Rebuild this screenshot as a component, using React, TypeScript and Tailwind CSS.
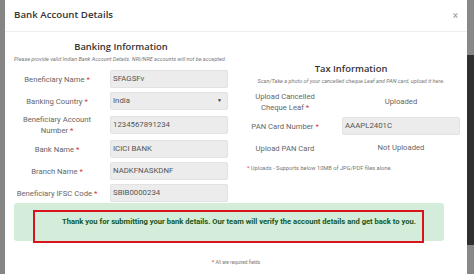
import React from "react";

const banking = [
  { label: ["Beneficiary Name"], value: "SFAGSFv" },
  { label: ["Banking Country"], value: "India", select: true },
  { label: ["Beneficiary Account", "Number"], value: "1234567891234" },
  { label: ["Bank Name"], value: "ICICI BANK" },
  { label: ["Branch Name"], value: "NADKFNASKDNF" },
  { label: ["Beneficiary IFSC Code"], value: "SBIB0000234" },
];

function Star() {
  return <span className="text-[#e0323a]"> *</span>;
}

function Label({ lines, required = true }: { lines: string[]; required?: boolean }) {
  return (
    <div className="w-[86px] shrink-0 text-center text-[7.7px] leading-[11px] text-[#666]">
      {lines.map((l, i) => (
        <div key={l}>
          {l}
          {required && i === lines.length - 1 && <Star />}
        </div>
      ))}
    </div>
  );
}

function Field({ value, select }: { value: string; select?: boolean }) {
  return (
    <div className="flex h-[18px] w-[118px] items-center justify-between rounded-[2px] border border-[#e2e2e2] bg-[#ececec] pl-[2px] pr-[5px] text-[7.8px] text-[#555]">
      <span>{value}</span>
      {select && <span className="text-[5px] text-[#333]">▼</span>}
    </div>
  );
}

export default function App() {
  return (
    <div className="flex h-[274px] w-[474px] overflow-hidden bg-[#808080] font-['Roboto',sans-serif]">
      <div className="w-[5px] shrink-0 bg-[#858585]" />
      <div className="flex w-[462px] shrink-0 flex-col bg-white">
        <div className="flex h-[32px] shrink-0 items-center justify-between border-b border-[#eeeeee] pl-[9px] pr-[9px]">
          <h1 className="font-['Open_Sans',sans-serif] text-[9.7px] font-semibold text-[#333]">
            Bank Account Details
          </h1>
          <span className="text-[10px] leading-none text-[#999]">×</span>
        </div>

        <div className="flex flex-col px-[9px]">
          <div className="flex gap-[14px]">
            <div className="flex w-[214px] flex-col">
              <h2 className="mt-[7px] text-center font-['Open_Sans',sans-serif] text-[9.4px] font-semibold leading-[16px] text-[#333]">
                Banking Information
              </h2>
              <p className="whitespace-nowrap text-[5.5px] italic leading-[8px] text-[#777]">
                Please provide valid Indian Bank Account Details. NRI/NRE accounts will not be accepted.
              </p>
              <div className="mt-[7px] flex flex-col gap-[4px]">
                {banking.map((r) => (
                  <div key={r.value} className="flex items-center gap-[10px]">
                    <Label lines={r.label} />
                    <Field value={r.value} select={r.select} />
                  </div>
                ))}
              </div>
            </div>

            <div className="flex w-[218px] flex-col">
              <h2 className="mt-[29px] text-center font-['Open_Sans',sans-serif] text-[9.4px] font-semibold leading-[16px] text-[#333]">
                Tax Information
              </h2>
              <p className="whitespace-nowrap text-center text-[5.5px] italic leading-[8px] text-[#777]">
                Scan/Take a photo of your cancelled cheque Leaf and PAN card, upload it here.
              </p>
              <div className="mt-[6px] flex flex-col gap-[4px]">
                <div className="flex items-center gap-[14px]">
                  <Label lines={["Upload Cancelled", "Cheque Leaf"]} />
                  <div className="w-[118px] text-center text-[7.7px] text-[#666]">Uploaded</div>
                </div>
                <div className="flex items-center gap-[14px]">
                  <Label lines={["PAN Card Number"]} />
                  <Field value="AAAPL2401C" />
                </div>
                <div className="flex h-[18px] items-center gap-[14px]">
                  <Label lines={["Upload PAN Card"]} required={false} />
                  <div className="w-[118px] text-center text-[7.7px] text-[#666]">Not Uploaded</div>
                </div>
              </div>
              <p className="mt-[7px] whitespace-nowrap pl-[5px] text-[5.7px] leading-[8px] text-[#777]">
                <span className="text-[#e0323a]">*</span> Uploads - Supports below 10MB of JPG/PDF files alone.
              </p>
            </div>
          </div>

          <div className="relative mt-[1px] flex h-[38px] w-[430px] items-center justify-center rounded-[3px] bg-[#d4edda] pl-[20px]">
            <p className="whitespace-nowrap text-[7.6px] font-bold text-[#155724]">
              Thank you for submitting your bank details. Our team will verify the account details and get back to you.
            </p>
            <div className="absolute left-[19px] top-[7px] h-[33px] w-[391px] border-2 border-[#d8131c]" />
          </div>

          <p className="mt-[17px] text-center text-[4.8px] leading-[8px] text-[#777]">
            <span className="text-[6px] text-[#e0323a]">*</span> All are required fields
          </p>
        </div>
      </div>
      <div className="flex w-[7px] shrink-0 flex-col">
        <div className="h-[55px] bg-[#888]" />
        <div className="h-[190px] bg-[#2f2f2f]" />
        <div className="flex-1 bg-[#888]" />
      </div>
    </div>
  );
}
